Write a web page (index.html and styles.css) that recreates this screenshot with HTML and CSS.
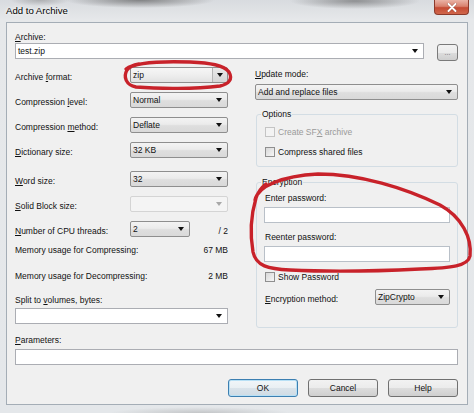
FILE: index.html
```html
<!DOCTYPE html>
<html>
<head>
<meta charset="utf-8">
<link rel="stylesheet" href="styles.css">
</head>
<body>
<div class="window">
  <div class="titlebar">
    <span class="title">Add to Archive</span>
    <div class="close">
      <svg width="10" height="9" viewBox="0 0 10 9"><path d="M1.5 1 L8.5 8 M8.5 1 L1.5 8" stroke="#6b2418" stroke-width="3" stroke-linecap="round" opacity="0.5"/><path d="M1.5 1 L8.5 8 M8.5 1 L1.5 8" stroke="#fff" stroke-width="2" stroke-linecap="round"/></svg>
    </div>
  </div>
  <div class="client">
    <div class="line"><u>A</u>rchive:</div>
    <div class="archive-row">
      <div class="combo edit archive-combo"><span>test.zip</span><span class="arrow"></span></div>
      <div class="dots">...</div>
    </div>
    <div class="columns">
      <div class="left">
        <div class="row"><span class="lbl">Archive <u>f</u>ormat:</span><div class="combo w98 split"><span>zip</span><span class="dd"><span class="arrow"></span></span></div></div>
        <div class="row"><span class="lbl">Compression <u>l</u>evel:</span><div class="combo w98"><span>Normal</span><span class="arrow"></span></div></div>
        <div class="row"><span class="lbl">Compression <u>m</u>ethod:</span><div class="combo w98"><span>Deflate</span><span class="arrow"></span></div></div>
        <div class="row"><span class="lbl"><u>D</u>ictionary size:</span><div class="combo w98"><span>32 KB</span><span class="arrow"></span></div></div>
        <div class="row gap-big"><span class="lbl"><u>W</u>ord size:</span><div class="combo w98"><span>32</span><span class="arrow"></span></div></div>
        <div class="row"><span class="lbl"><u>S</u>olid Block size:</span><div class="combo w98 off"><span></span><span class="arrow"></span></div></div>
        <div class="row"><span class="lbl"><u>N</u>umber of CPU threads:</span><div class="combo w60"><span>2</span><span class="arrow"></span></div><span class="tail">/ 2</span></div>
        <div class="info mem1"><span>Memory usage for Compressing:</span><span>67 MB</span></div>
        <div class="info mem2"><span>Memory usage for Decompressing:</span><span>2 MB</span></div>
        <div class="line split-lbl">Split to <u>v</u>olumes, bytes:</div>
        <div class="combo edit split-combo"><span></span><span class="arrow"></span></div>
      </div>
      <div class="right">
        <div class="line update-lbl"><u>U</u>pdate mode:</div>
        <div class="combo update-combo"><span>Add and replace files</span><span class="arrow"></span></div>
        <fieldset class="group options">
          <legend>Options</legend>
          <div class="check first disabled"><span class="cb"></span><span>Create SF<u>X</u> archive</span></div>
          <div class="check second"><span class="cb"></span><span>Compress shared files</span></div>
        </fieldset>
        <fieldset class="group encryption">
          <legend>Encryption</legend>
          <div class="line enter-lbl">Enter password:</div>
          <div class="input pw"></div>
          <div class="line reenter-lbl">Reenter password:</div>
          <div class="input pw"></div>
          <div class="check showpw"><span class="cb"></span><span>Show Password</span></div>
          <div class="method-row"><span class="lbl2"><u>E</u>ncryption method:</span><div class="combo w75"><span>ZipCrypto</span><span class="arrow"></span></div></div>
        </fieldset>
      </div>
    </div>
    <div class="line params-lbl"><u>P</u>arameters:</div>
    <div class="input params"></div>
    <div class="buttons">
      <div class="btn default">OK</div>
      <div class="btn">Cancel</div>
      <div class="btn">Help</div>
    </div>
  </div>
  <svg class="marks" width="474" height="413" viewBox="0 0 474 413">
    <path d="M126 69 C 134 63, 160 61, 190 62 C 210 63, 224 65, 229 72 C 233 79, 229 84, 220 86 C 195 89, 160 89, 136 87 C 126 85, 123 77, 127 70 C 129 67, 133 65, 139 64" fill="none" stroke="#c8222a" stroke-width="3.4" stroke-linecap="round"/>
    <path d="M255 200 C 258 186, 282 176, 318 174 C 360 174, 405 188, 440 205 C 462 217, 472 238, 470 256 C 468 266, 452 268, 420 269 C 380 271, 330 272, 290 270 C 268 269, 256 266, 253 252 C 250 235, 251 215, 256 198 C 258 192, 262 187, 266 184" fill="none" stroke="#c8222a" stroke-width="3.4" stroke-linecap="round"/>
  </svg>
</div>
</body>
</html>
```
FILE: styles.css
```css
body {
  margin: 0;
}

.window {
  position: relative;
  width: 474px;
  height: 413px;
  overflow: hidden;
  font-family: "Liberation Sans", Arial, sans-serif;
  font-size: 8.5px;
  color: #111;
  background:
    radial-gradient(ellipse 75px 8px at 140px 0, rgba(70, 70, 70, 0.6), transparent),
    radial-gradient(ellipse 65px 8px at 355px 1px, rgba(70, 70, 70, 0.5), transparent),
    radial-gradient(ellipse 30px 6px at 40px 0, rgba(90, 90, 90, 0.35), transparent),
    radial-gradient(ellipse 90px 6px at 200px 413px, rgba(120, 120, 120, 0.3), transparent),
    linear-gradient(#d8dbdf, #e6e8ea 20px, #e4e7ea);
}

.titlebar {
  height: 22px;
  box-sizing: border-box;
  padding: 0 5px 0 6px;
  display: flex;
  justify-content: space-between;
  align-items: flex-start;
}

.title {
  font-size: 9.6px;
  line-height: 22px;
  color: #000;
  text-shadow: 0 0 5px #fff, 0 0 3px #fff;
}

.close {
  width: 35px;
  height: 15px;
  box-sizing: border-box;
  border: 1px solid #8c3a2b;
  border-top: none;
  border-radius: 0 0 4px 4px;
  background: linear-gradient(#eab3a6, #d9826f 45%, #c54b34 55%, #d0674c);
  display: flex;
  align-items: center;
  justify-content: center;
}

.client {
  margin: 0 6px;
  height: 383px;
  box-sizing: border-box;
  border: 1px solid #a4adb6;
  background: #f0f0f0;
  padding: 8px 9px 0 8px;
}

.line {
  height: 12px;
  line-height: 12px;
  white-space: nowrap;
}

.archive-row {
  display: flex;
  gap: 13px;
  align-items: flex-start;
  height: 18px;
}

.combo {
  height: 16px;
  box-sizing: border-box;
  display: flex;
  align-items: center;
  justify-content: space-between;
  border: 1px solid #8e8e8e;
  border-radius: 2px;
  background: linear-gradient(#f3f3f3, #ebebeb 45%, #dedede 55%, #d9d9d9);
  padding-left: 2px;
  white-space: nowrap;
}

.combo.edit {
  background: #fff;
  border-color: #abadb3;
  border-radius: 0;
}

.combo.off {
  background: #f4f4f4;
  border-color: #d4d4d4;
}

.combo.off .arrow {
  border-top-color: #a8a8a8;
}

.arrow {
  width: 0;
  height: 0;
  border-left: 3.5px solid transparent;
  border-right: 3.5px solid transparent;
  border-top: 4px solid #111;
  margin-right: 5px;
}

.combo.split {
  background: linear-gradient(#f6f6f6, #eeeeee 50%, #e2e2e2);
}

.dd {
  align-self: stretch;
  width: 14px;
  display: flex;
  align-items: center;
  justify-content: center;
  border-left: 1px solid #b4b4b4;
  background: linear-gradient(#e9e9e9, #d6d6d6);
}

.dd .arrow {
  margin-right: 0;
}

.archive-combo {
  width: 409px;
}

.dots {
  margin-top: 1px;
  width: 21px;
  height: 17px;
  box-sizing: border-box;
  border: 1px solid #7a7a7a;
  border-radius: 3px;
  background: linear-gradient(#f2f2f2, #ebebeb 50%, #dddddd 50%, #cfcfcf);
  display: flex;
  align-items: center;
  justify-content: center;
  font-size: 7px;
  color: #666;
  line-height: 10px;
}

.columns {
  margin-top: 6px;
  display: flex;
  gap: 27px;
  align-items: flex-start;
}

.left {
  width: 213px;
  display: flex;
  flex-direction: column;
}

.right {
  width: 203px;
  display: flex;
  flex-direction: column;
}

.row {
  height: 16px;
  display: flex;
  align-items: center;
  margin-top: 9px;
}

.row:first-child {
  margin-top: 0;
}

.row.gap-big {
  margin-top: 13px;
}

.lbl {
  width: 115px;
  flex: none;
  padding-top: 3px;
  white-space: nowrap;
}

.w98 {
  width: 98px;
}

.w60 {
  width: 60px;
}

.w75 {
  width: 75px;
}

.tail {
  margin-left: auto;
  padding-top: 3px;
}

.info {
  height: 12px;
  line-height: 12px;
  display: flex;
  justify-content: space-between;
  white-space: nowrap;
}

.mem1 {
  margin-top: 7px;
}

.mem2 {
  margin-top: 14px;
}

.split-lbl {
  margin-top: 12px;
}

.split-combo {
  margin-top: 2px;
  width: 213px;
}

.update-lbl {
  margin-top: 1px;
}

.update-combo {
  margin-top: 4px;
  width: 203px;
}

.group {
  margin: 8px 0 0 1px;
  padding: 0 7px 8px;
  border: 1px solid #d3dde4;
  border-radius: 3px;
  min-width: 0;
}

.group legend {
  padding: 0 1px;
  margin-left: -3px;
  line-height: 12px;
  height: 12px;
}

.encryption {
  margin-top: 9px;
  padding-bottom: 22px;
}

.check {
  height: 12px;
  display: flex;
  align-items: center;
  white-space: nowrap;
  margin-left: 1px;
}

.cb {
  width: 10px;
  height: 10px;
  box-sizing: border-box;
  border: 1px solid #8f8f8f;
  background: linear-gradient(135deg, #d8d8d8, #f6f6f6);
  margin-right: 3px;
}

.check.first {
  margin-top: 6px;
}

.check.second {
  margin-top: 8px;
}

.check.disabled {
  color: #9a9a9a;
}

.check.disabled .cb {
  border-color: #c4c4c4;
  background: #f3f3f3;
}

.enter-lbl {
  margin-top: 4px;
  margin-left: 1px;
}

.reenter-lbl {
  margin-top: 8px;
  margin-left: 1px;
}

.input {
  height: 16px;
  box-sizing: border-box;
  background: #fff;
  border: 1px solid #b9c0c8;
}

.pw {
  margin-top: 3px;
}

.showpw {
  margin-top: 9px;
}

.method-row {
  margin-top: 6px;
  height: 16px;
  display: flex;
  align-items: center;
  justify-content: space-between;
}

.lbl2 {
  padding-top: 3px;
  margin-left: 1px;
  white-space: nowrap;
}

.params-lbl {
  margin-top: 6px;
}

.params {
  margin-top: 3px;
  border-color: #abadb3;
}

.buttons {
  margin-top: 14px;
  display: flex;
  justify-content: flex-end;
  gap: 10px;
}

.btn {
  width: 70px;
  height: 18px;
  box-sizing: border-box;
  border: 1px solid #707070;
  border-radius: 3px;
  background: linear-gradient(#f2f2f2, #ebebeb 50%, #dddddd 50%, #cfcfcf);
  display: flex;
  align-items: center;
  justify-content: center;
}

.btn.default {
  border-color: #3c7fb1;
  box-shadow: inset 0 0 0 1px #b8e0f5;
  background: linear-gradient(#f1f6f9, #e9eff3 50%, #dae3ea 50%, #cfdbe4);
}

.marks {
  position: absolute;
  top: 0;
  left: 0;
  pointer-events: none;
}
```
